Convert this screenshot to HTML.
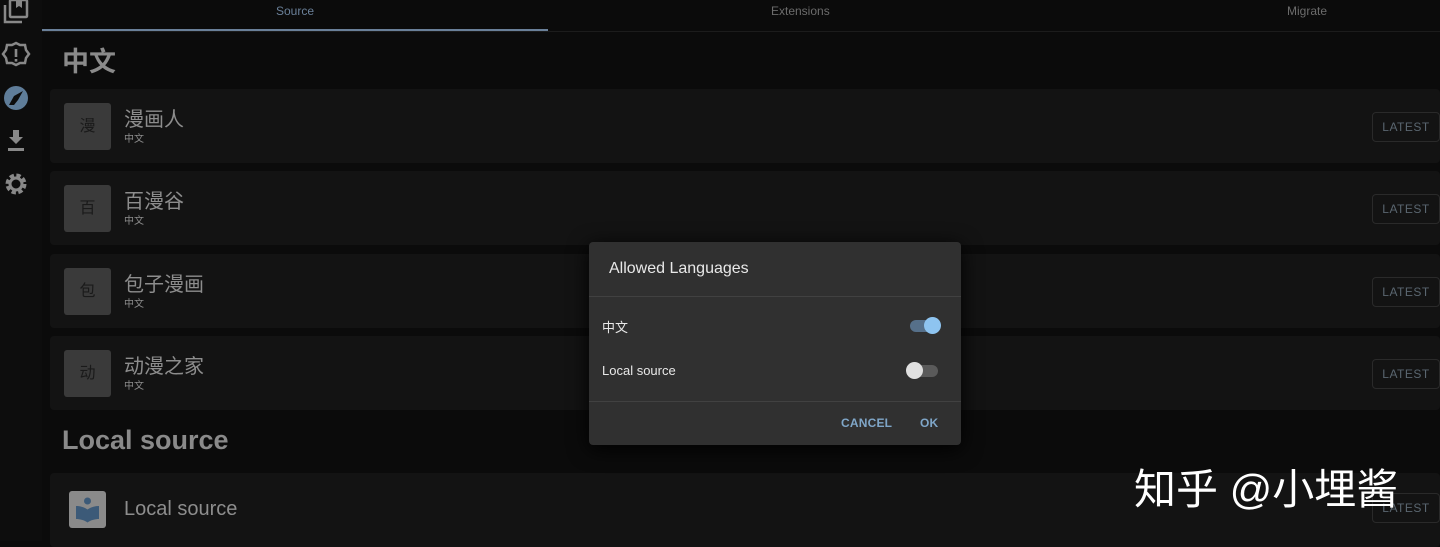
<!DOCTYPE html>
<html><head><meta charset="utf-8"><style>
*{margin:0;padding:0;box-sizing:border-box}
body{width:1440px;height:541px;overflow:hidden;background:#0b0b0b;font-family:"Liberation Sans","Noto Sans CJK SC",sans-serif;position:relative;color:#8a8a8a}
.side{position:absolute;left:0;top:0;width:42px;height:541px;background:#0d0d0d}
.tabs{position:absolute;left:42px;top:0;right:0;height:32px;border-bottom:1px solid #1c1c1c;font-size:12px}
.tab{position:absolute;top:4px;color:#6c6c6c}
.card{position:absolute;left:50px;right:0;height:74px;background:#131313;border-radius:4px}
.thumb{position:absolute;left:14px;top:14px;width:47px;height:47px;background:#3a3a3a;border-radius:3px;color:#1a1a1a;font-size:16px;text-align:center;line-height:47px}
.name{position:absolute;left:74px;top:14px;font-size:20px;color:#8d8d8d}
.sub{position:absolute;left:74px;top:41px;font-size:10px;color:#8d8d8d}
.btn{position:absolute;right:0;top:23px;width:68px;height:30px;border:1px solid #2a2a2a;border-radius:4px;font-size:12px;color:#5a6670;line-height:28px;text-align:center;letter-spacing:.5px}
h2{position:absolute;left:62px;font-size:27px;font-weight:bold;color:#8a8a8a}
.dlg{position:absolute;left:589px;top:242px;width:372px;height:203px;background:#303030;border-radius:4px;box-shadow:0 4px 20px #000}
.dlg .t{position:absolute;left:20px;top:18px;font-size:16px;color:#e8e8e8}
.hr{position:absolute;left:0;right:0;height:1px;background:#414141}
.lbl{position:absolute;left:13px;font-size:13px;color:#e8e8e8}
.tr{position:absolute;width:30px;height:12px;border-radius:6px}
.kn{position:absolute;width:17px;height:17px;border-radius:50%}
.act{position:absolute;top:174px;font-size:12px;color:#7fa6c8;font-weight:bold;letter-spacing:.2px}
.wm{position:absolute;left:1134px;top:456px;font-size:42px;color:#fff;font-family:"Liberation Sans","Noto Sans CJK SC",sans-serif}
</style></head><body>
<div class="side">
<svg width="42" height="200" viewBox="0 0 42 200">
<g fill="none" stroke="#888" stroke-width="2.5">
<rect x="10" y="0" width="17" height="17" rx="1"/><path d="M5 5v17h17"/>
</g>
<path d="M16 0v8l3-2 3 2V0" fill="#888"/>
<path d="M16 43l4 2 5 0 1 5 3 4-3 4-1 5-5 0-4 2-4-2-5 0-1-5-3-4 3-4 1-5 5 0z" fill="none" stroke="#888" stroke-width="2.5"/>
<rect x="14.7" y="49" width="2.6" height="8" fill="#888"/><rect x="14.7" y="59" width="2.6" height="2.6" fill="#888"/>
<circle cx="16" cy="98" r="12" fill="#5f7d99"/>
<path d="M23 91l-5 9-4 5-5 0 5-9z" fill="#0d0d0d"/>
<path d="M13 130h6v7h4l-7 7-7-7h4z M8 148h16v3H8z" fill="#888"/>
<circle cx="16" cy="184" r="8" fill="none" stroke="#888" stroke-width="5" stroke-dasharray="4 2.3"/>
<circle cx="16" cy="184" r="6" fill="none" stroke="#888" stroke-width="3"/>
</svg>
</div>
<div class="tabs">
<div class="tab" style="left:234px;color:#6a8099">Source</div>
<div class="tab" style="left:729px">Extensions</div>
<div class="tab" style="left:1245px">Migrate</div>
<div style="position:absolute;left:0;top:29px;width:506px;height:2px;background:#6a8099"></div>
</div>
<h2 style="top:40px">中文</h2>
<div class="card" style="top:89px"><div class="thumb">漫</div><div class="name">漫画人</div><div class="sub">中文</div><div class="btn">LATEST</div></div>
<div class="card" style="top:171px"><div class="thumb">百</div><div class="name">百漫谷</div><div class="sub">中文</div><div class="btn">LATEST</div></div>
<div class="card" style="top:254px"><div class="thumb">包</div><div class="name">包子漫画</div><div class="sub">中文</div><div class="btn">LATEST</div></div>
<div class="card" style="top:336px"><div class="thumb">动</div><div class="name">动漫之家</div><div class="sub">中文</div><div class="btn">LATEST</div></div>
<h2 style="top:425px">Local source</h2>
<div class="card" style="top:473px"><div class="thumb" style="left:19px;top:18px;width:37px;height:37px;background:#8a8a8a">
<svg width="37" height="37" viewBox="0 0 37 37"><circle cx="18.5" cy="10" r="3.5" fill="#3c5a78"/><path d="M7 15c4 0 8 1 11.5 3.5C22 16 26 15 30 15v13c-4 0-8 1-11.5 3.5C15 29 11 28 7 28z" fill="#3c5a78"/></svg></div>
<div class="name" style="top:25px">Local source</div><div class="btn" style="top:20px">LATEST</div></div>
<div class="dlg">
<div class="t">Allowed Languages</div>
<div class="hr" style="top:54px"></div>
<div class="lbl" style="top:75px">中文</div>
<div class="tr" style="left:321px;top:78px;background:#56708a"></div><div class="kn" style="left:335px;top:75px;background:#8ec4f0"></div>
<div class="lbl" style="top:121px">Local source</div>
<div class="tr" style="left:319px;top:123px;background:#5a5a5a"></div><div class="kn" style="left:317px;top:120px;background:#e0e0e0"></div>
<div class="hr" style="top:159px"></div>
<div class="act" style="left:252px">CANCEL</div>
<div class="act" style="left:331px">OK</div>
</div>
<div class="wm">知乎 @小埋酱</div>
</body></html>
